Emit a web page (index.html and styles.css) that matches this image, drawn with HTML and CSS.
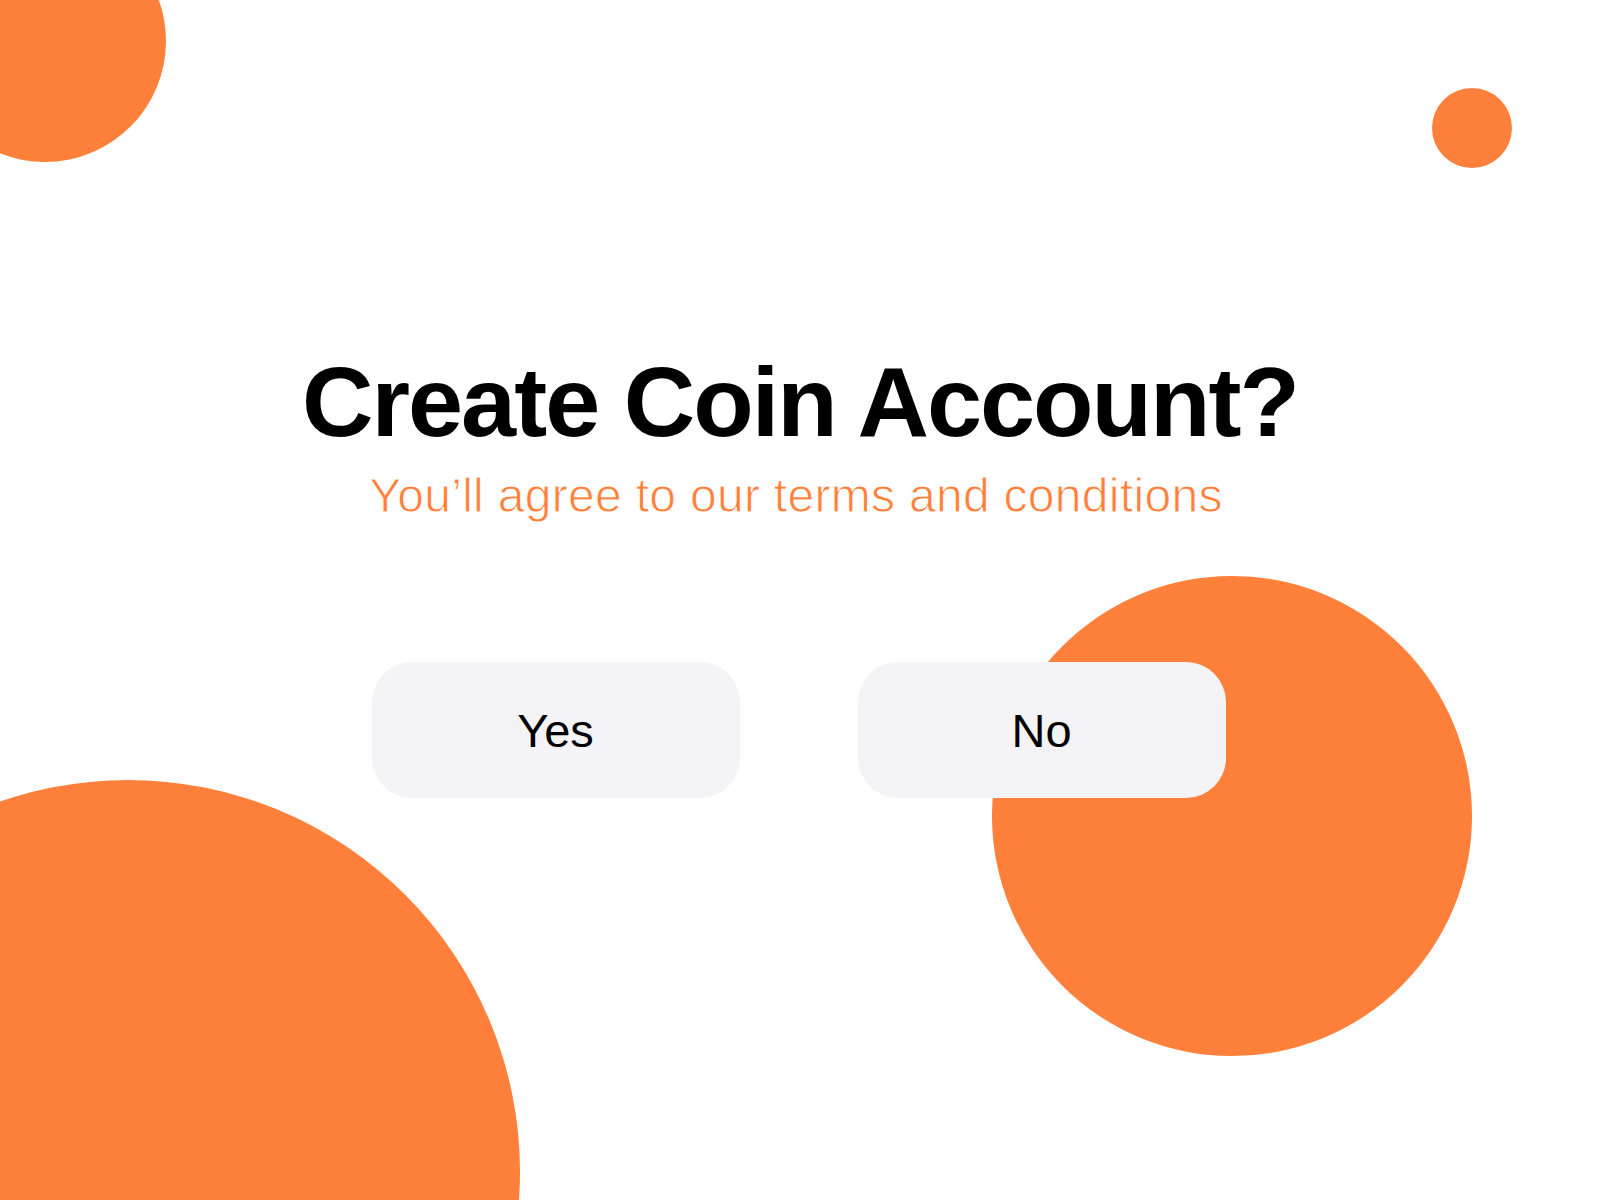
FILE: index.html
```html
<!DOCTYPE html>
<html lang="en">
<head>
<meta charset="utf-8">
<title>Create Coin Account?</title>
<link rel="stylesheet" href="styles.css">
</head>
<body>
<div class="page">
  <div class="blob blob-tl"></div>
  <div class="blob blob-tr"></div>
  <div class="blob blob-right"></div>
  <div class="blob blob-bl"></div>

  <main class="content">
    <h1 class="title">Create Coin Account?</h1>
    <p class="subtitle">You’ll agree to our terms and conditions</p>
    <div class="actions">
      <button class="btn" type="button">Yes</button>
      <button class="btn" type="button">No</button>
    </div>
  </main>
</div>
</body>
</html>
```

FILE: styles.css
```css
html, body {
  margin: 0;
  padding: 0;
  background: #ffffff;
}

.page {
  position: relative;
  width: 1600px;
  height: 1200px;
  overflow: hidden;
  background: #ffffff;
  font-family: "Liberation Sans", Arial, Helvetica, sans-serif;
}

.blob {
  position: absolute;
  border-radius: 50%;
  background: #ff803a;
}

.blob-tl {
  left: -76px;
  top: -80px;
  width: 242px;
  height: 242px;
}

.blob-tr {
  left: 1432px;
  top: 88px;
  width: 80px;
  height: 80px;
}

.blob-right {
  left: 992px;
  top: 576px;
  width: 480px;
  height: 480px;
}

.blob-bl {
  left: -264px;
  top: 780px;
  width: 784px;
  height: 784px;
}

.content {
  position: relative;
  display: flex;
  flex-direction: column;
  align-items: center;
  padding-top: 352px;
}

.title {
  margin: 0;
  font-size: 99px;
  line-height: 1;
  font-weight: 700;
  letter-spacing: -2px;
  color: #000000;
}

.subtitle {
  margin: 21px 0 0;
  font-size: 48px;
  line-height: 1;
  font-weight: 400;
  letter-spacing: 0.3px;
  color: #ff803a;
  -webkit-text-stroke: 0.9px #ffffff;
  padding-right: 8px;
}

.actions {
  display: flex;
  gap: 118px;
  margin-top: 142px;
  padding-right: 3px;
}

.btn {
  width: 368px;
  height: 136px;
  border: none;
  border-radius: 40px;
  background: #f4f4f6;
  font-family: "Liberation Sans", Arial, Helvetica, sans-serif;
  font-size: 47px;
  font-weight: 400;
  color: #000000;
  padding: 0;
  cursor: pointer;
}
```
